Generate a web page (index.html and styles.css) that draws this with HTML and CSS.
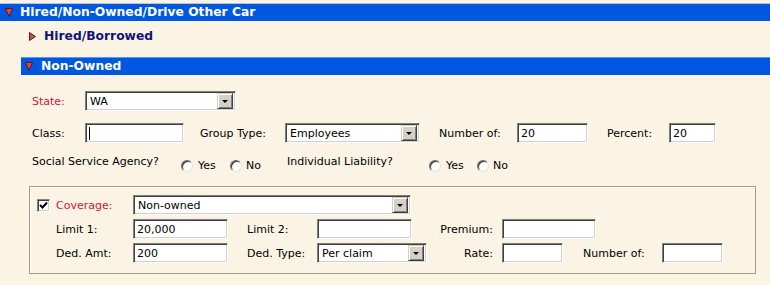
FILE: index.html
```html
<!DOCTYPE html>
<html>
<head>
  <title>Hired/Non-Owned/Drive Other Car</title>
  <link rel="stylesheet" href="styles.css">
</head>
<body>
  <div class="bar top-bar">
    <svg class="tri" width="8" height="9" viewBox="0 0 8 9"><polygon points="0.5,0.5 7.5,0.5 4,8.5" fill="#d24a4a" stroke="#6a1010" stroke-width="1"/></svg>
    Hired/Non-Owned/Drive Other Car
  </div>

  <div class="sub-head">
    <svg class="tri-r" width="7" height="9" viewBox="0 0 7 9"><polygon points="0.5,0.5 6.5,4.5 0.5,8.5" fill="#c05050" stroke="#6a1818" stroke-width="1"/></svg>
    Hired/Borrowed
  </div>

  <div class="bar sub-bar">
    <svg class="tri" width="8" height="9" viewBox="0 0 8 9"><polygon points="0.5,0.5 7.5,0.5 4,8.5" fill="#d24a4a" stroke="#6a1010" stroke-width="1"/></svg>
    Non-Owned
  </div>

  <div class="form">
    <div class="row row-state">
      <span class="lbl req" style="width:53px">State:</span>
      <div class="select" style="width:151px"><span class="val">WA</span><span class="drop"></span></div>
    </div>

    <div class="row row-class">
      <span class="lbl" style="width:53px">Class:</span>
      <div class="input" style="width:99px"><span class="caret"></span></div>
      <span class="lbl gap16" style="width:85px">Group Type:</span>
      <div class="select" style="width:135px"><span class="val">Employees</span><span class="drop"></span></div>
      <span class="lbl gap19" style="width:78px">Number of:</span>
      <div class="input" style="width:71px">20</div>
      <span class="lbl gap19" style="width:62px">Percent:</span>
      <div class="input" style="width:47px">20</div>
    </div>

    <div class="row row-radio">
      <span class="lbl" style="width:149px">Social Service Agency?</span>
      <div class="radios">
        <span class="radio"></span><span class="opt" style="width:32px">Yes</span>
        <span class="radio"></span><span class="opt" style="width:41px">No</span>
      </div>
      <span class="lbl" style="width:142px">Individual Liability?</span>
      <div class="radios">
        <span class="radio"></span><span class="opt" style="width:31px">Yes</span>
        <span class="radio"></span><span class="opt">No</span>
      </div>
    </div>

    <div class="coverage-box">
      <div class="crow">
        <span class="check">
          <svg width="9" height="9" viewBox="0 0 9 9"><path d="M1 4 L3.5 6.5 L8 1.5" fill="none" stroke="#000" stroke-width="2"/></svg>
        </span>
        <span class="lbl req" style="width:77px">Coverage:</span>
        <div class="select" style="width:278px"><span class="val">Non-owned</span><span class="drop"></span></div>
      </div>
      <div class="crow indent">
        <span class="lbl" style="width:77px">Limit 1:</span>
        <div class="input" style="width:95px">20,000</div>
        <span class="lbl gap19" style="width:70px">Limit 2:</span>
        <div class="input" style="width:95px"></div>
        <span class="lbl right" style="width:90px">Premium:</span>
        <div class="input" style="width:94px"></div>
      </div>
      <div class="crow indent">
        <span class="lbl" style="width:77px">Ded. Amt:</span>
        <div class="input" style="width:95px">200</div>
        <span class="lbl gap19" style="width:70px">Ded. Type:</span>
        <div class="select" style="width:110px"><span class="val">Per claim</span><span class="drop"></span></div>
        <span class="lbl right" style="width:75px">Rate:</span>
        <div class="input" style="width:61px"></div>
        <span class="lbl gap20" style="width:79px">Number of:</span>
        <div class="input" style="width:61px"></div>
      </div>
    </div>
  </div>
</body>
</html>
```

FILE: styles.css
```css
body {
  margin: 0;
  background-color: #fbf4e4;
  font-family: "DejaVu Sans", Verdana, sans-serif;
  font-size: 11px;
  color: #000;
}

.bar {
  display: flex;
  align-items: center;
  height: 17px;
  background-color: #0058e0;
  color: #fff;
  font-size: 12.3px;
  font-weight: bold;
  line-height: 17px;
  white-space: nowrap;
}

.top-bar {
  margin-top: 3px;
  border-top: 1px solid #b8c2d2;
}

.top-bar .tri {
  margin: 0 7px 0 5px;
}

.sub-bar {
  margin-left: 21px;
  border-top: 1px solid #5c96f0;
}

.sub-bar .tri {
  margin: 0 8px 0 4px;
}

.sub-head {
  display: flex;
  align-items: center;
  padding: 8px 0 14px 29px;
  line-height: 14px;
  font-size: 12.3px;
  font-weight: bold;
  color: #12127a;
}

.sub-head .tri-r {
  margin-right: 8px;
}

.form {
  padding-left: 32px;
}

.row {
  display: flex;
  align-items: center;
  height: 20px;
}

.row-state {
  margin-top: 16px;
}

.row-class {
  margin-top: 12px;
}

.row-radio {
  margin-top: 12px;
  align-items: flex-start;
}

.row-radio .lbl {
  line-height: 14px;
}

.lbl {
  flex: none;
  white-space: nowrap;
}

.lbl.req {
  color: #d2143c;
}

.lbl.right {
  text-align: right;
  padding-right: 9px;
  box-sizing: border-box;
}

.gap16 { margin-left: 16px; }
.gap19 { margin-left: 19px; }
.gap20 { margin-left: 20px; }

.input,
.select,
.check {
  box-sizing: border-box;
  height: 20px;
  background: #fff;
  border: 1px solid;
  border-color: #808080 #ffffff #ffffff #808080;
  box-shadow: inset 1px 1px 0 #404040, inset -1px -1px 0 #d4d0c8;
  flex: none;
}

.input {
  padding: 1px 3px 0;
  line-height: 18px;
  position: relative;
}

.caret {
  position: absolute;
  left: 3px;
  top: 3px;
  width: 1px;
  height: 13px;
  background: #000;
}

.select {
  display: flex;
  align-items: center;
  padding: 2px;
}

.select .val {
  flex: 1;
  padding-left: 2px;
  padding-top: 1px;
  line-height: 16px;
}

.drop {
  box-sizing: border-box;
  width: 16px;
  height: 16px;
  background: #d4d0c8;
  border: 1px solid;
  border-color: #d4d0c8 #404040 #404040 #d4d0c8;
  box-shadow: inset 1px 1px 0 #fff, inset -1px -1px 0 #808080;
  position: relative;
}

.drop::after {
  content: "";
  position: absolute;
  left: 4px;
  top: 6px;
  border-left: 3px solid transparent;
  border-right: 3px solid transparent;
  border-top: 3px solid #000;
}

.radios {
  display: flex;
  align-items: center;
  margin-top: 4px;
  line-height: 14px;
}

.radio {
  box-sizing: border-box;
  width: 12px;
  height: 12px;
  border-radius: 50%;
  background: #fff;
  border: 1px solid;
  border-color: #6a6a6a #e8e4dc #e8e4dc #6a6a6a;
  box-shadow: inset 1px 1px 0 #303030;
  flex: none;
}

.opt {
  margin-left: 5px;
  flex: none;
}

.radios .radio + .opt + .radio + .opt {
  margin-left: 4px;
}

.coverage-box {
  margin: 11px 0 0 -3px;
  width: 727px;
  box-sizing: border-box;
  height: 88px;
  border: 1px solid #a89c84;
  box-shadow: inset 1px 1px 0 #fff;
  padding: 8px 0 0 7px;
}

.crow {
  display: flex;
  align-items: center;
  height: 20px;
  margin-bottom: 4px;
}

.crow.indent {
  padding-left: 19px;
}

.check {
  width: 13px;
  height: 13px;
  margin-right: 6px;
  display: flex;
  align-items: center;
  justify-content: center;
}
```
